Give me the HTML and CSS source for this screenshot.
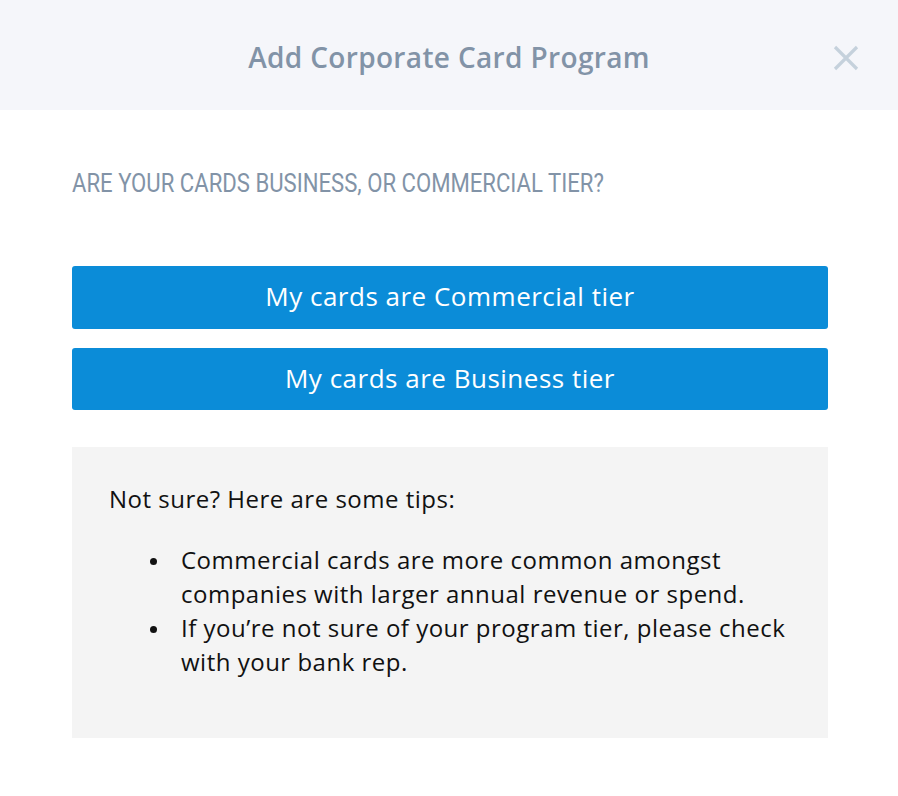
FILE: index.html
```html
<!DOCTYPE html>
<html>
<head>
<meta charset="utf-8">
<link rel="stylesheet" href="styles.css">
</head>
<body>
<div class="modal">
  <header class="modal-header">
    <h1 class="modal-title">Add Corporate Card Program</h1>
    <button class="close" aria-label="Close">
      <svg width="26" height="26" viewBox="0 0 26 26"><path d="M2 2 L24 24 M24 2 L2 24" stroke="#c5d1dc" stroke-width="3.2" stroke-linecap="butt" fill="none"/></svg>
    </button>
  </header>
  <main class="modal-body">
    <h2 class="question">ARE YOUR CARDS BUSINESS, OR COMMERCIAL TIER?</h2>
    <div class="actions">
      <button class="btn">My cards are Commercial tier</button>
      <button class="btn">My cards are Business tier</button>
    </div>
    <section class="tips">
      <p class="tips-lead">Not sure? Here are some tips:</p>
      <ul class="tips-list">
        <li>Commercial cards are more common amongst companies with larger annual revenue or spend.</li>
        <li>If you’re not sure of your program tier, please check with your bank rep.</li>
      </ul>
    </section>
  </main>
</div>
</body>
</html>
```
FILE: styles.css
```css
* { box-sizing: border-box; }
html, body { margin: 0; padding: 0; background: #fff; }
body { font-family: "Open Sans", "Noto Sans", sans-serif; }
.modal { width: 898px; }
.modal-header {
  height: 110px;
  background: #f5f6fa;
  display: flex;
  align-items: center;
  justify-content: center;
  position: relative;
}
.modal-title {
  margin: 0;
  font-size: 28px;
  font-weight: 600;
  color: #8293a7;
  letter-spacing: 0.35px;
  line-height: 36px;
  padding-top: 4px;
}
.close {
  position: absolute;
  right: 39px;
  top: 45px;
  background: none;
  border: 0;
  padding: 0;
  width: 26px;
  height: 26px;
  cursor: pointer;
}
.close svg { display: block; }
.modal-body { padding: 60px 70px 0 72px; }
.question {
  margin: 0;
  font-family: "Roboto", sans-serif;
  font-weight: 400;
  font-size: 25px;
  line-height: 28px;
  color: #8293a7;
  transform: scaleX(0.885);
  transform-origin: left center;
  white-space: nowrap;
}
.actions {
  margin-top: 68px;
  display: flex;
  flex-direction: column;
  gap: 19px;
}
.btn {
  height: 63px;
  border: 0;
  border-radius: 3px;
  background: #0b8cd8;
  color: #fff;
  font-family: "Open Sans", sans-serif;
  font-size: 26px;
  letter-spacing: 0.5px;
  padding: 0 0 3px;
  cursor: pointer;
}
.btn + .btn { height: 62px; }
.tips {
  margin-top: 37px;
  background: #f4f4f4;
  height: 291px;
  padding: 35px 30px 0 37px;
  color: #111;
  font-size: 24px;
  letter-spacing: 0.5px;
}
.tips-lead { margin: 0; line-height: 34px; }
.tips-list {
  margin: 27px 0 0;
  padding-left: 72px;
  line-height: 34px;
  list-style: none;
}
.tips-list li::before {
  content: "";
  display: inline-block;
  width: 7px;
  height: 7px;
  border-radius: 50%;
  background: #111;
  margin-left: -31px;
  margin-right: 24px;
  vertical-align: middle;
  position: relative;
  top: -1px;
}
```
